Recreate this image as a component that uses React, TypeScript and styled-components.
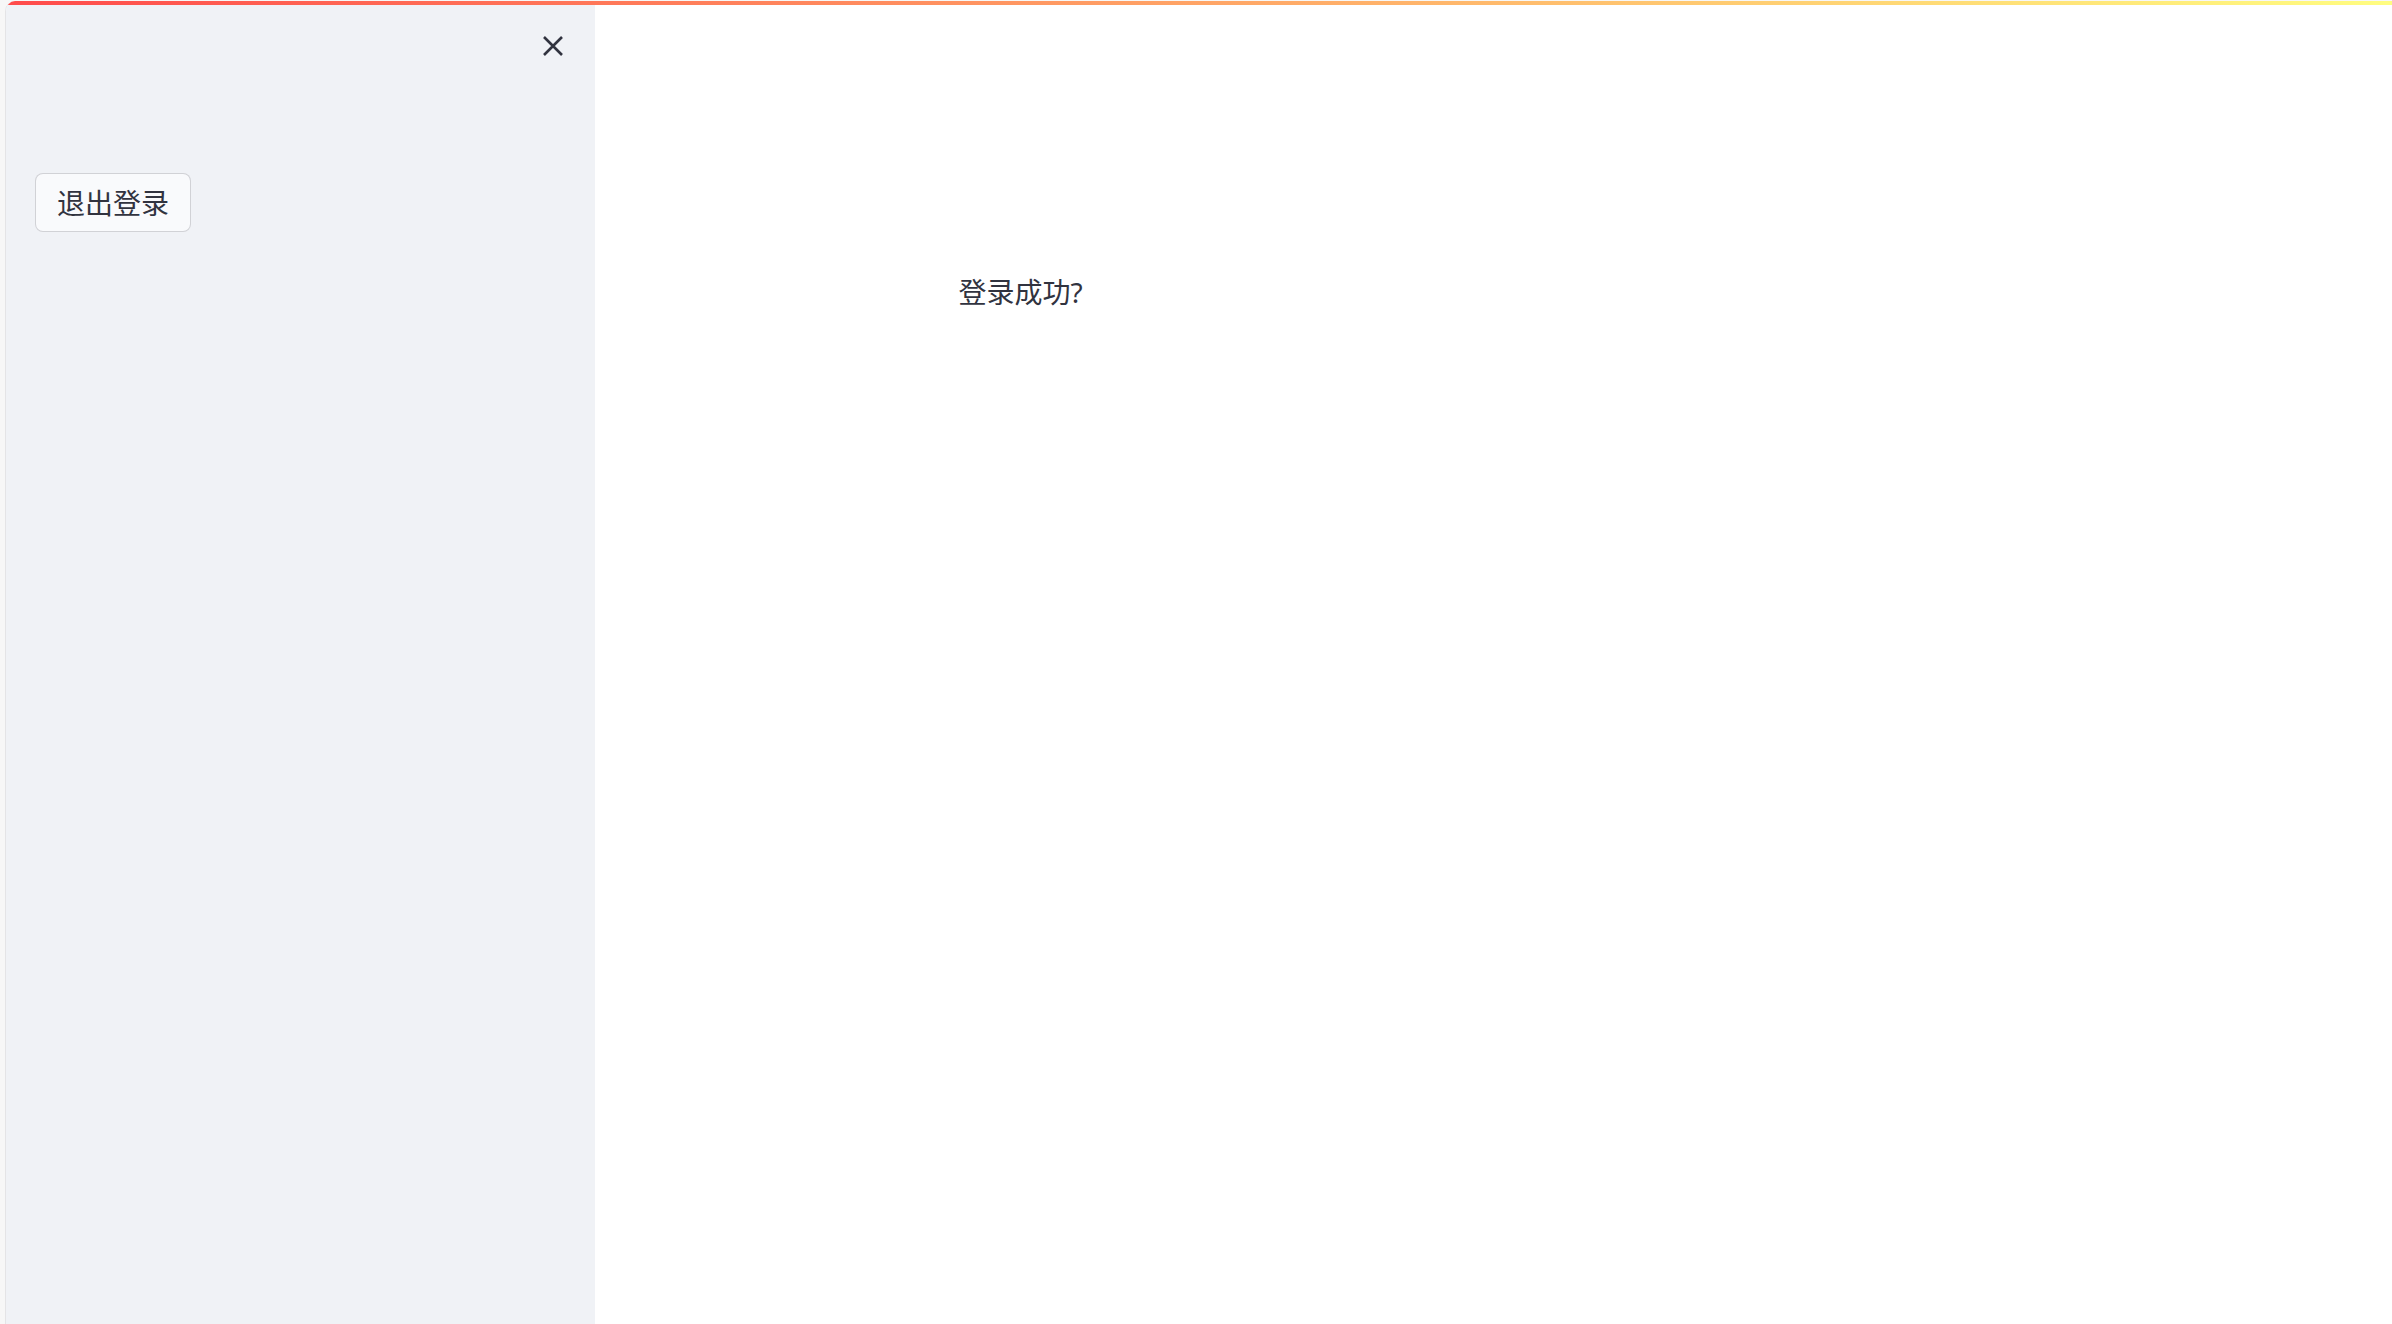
import React from "react";
import styled, { createGlobalStyle } from "styled-components";

const GlobalStyle = createGlobalStyle`
  html, body {
    margin: 0;
    padding: 0;
    height: 100%;
    background-color: #f7f7f7;
  }
  #root {
    height: 100%;
  }
  * {
    box-sizing: border-box;
  }
`;

const Shell = styled.div`
  display: flex;
  flex-direction: column;
  height: calc(100vh - 1px);
  margin: 1px 0 0 5px;
  border-left: 1px solid #e4e4e6;
  border-top-left-radius: 10px;
  overflow: hidden;
  background-color: #ffffff;
  font-family: "Noto Sans", "Noto Sans CJK SC", sans-serif;
  color: #31333f;
`;

const Decoration = styled.div`
  height: 4px;
  flex-shrink: 0;
  background-image: linear-gradient(90deg, #ff4b4b, #fffd80);
`;

const Body = styled.div`
  display: flex;
  flex: 1;
  min-height: 0;
`;

const Sidebar = styled.aside`
  width: 589px;
  flex-shrink: 0;
  background-color: #f0f2f6;
  display: flex;
  flex-direction: column;
  padding: 31px 32px 0 29px;
`;

const SidebarHeader = styled.div`
  display: flex;
  justify-content: flex-end;
  height: 20px;
  margin-bottom: 117px;
`;

const CloseButton = styled.button`
  width: 20px;
  height: 20px;
  padding: 0;
  border: none;
  background: transparent;
  color: #31333f;
  cursor: pointer;
  display: flex;
  align-items: center;
  justify-content: center;
`;

const SecondaryButton = styled.button`
  align-self: flex-start;
  height: 59px;
  padding: 0 21px;
  border: 1px solid rgba(49, 51, 63, 0.2);
  border-radius: 8px;
  background-color: #f9fafc;
  color: #31333f;
  font-family: "Noto Sans", "Noto Sans CJK SC", sans-serif;
  font-size: 28px;
  line-height: 1;
  cursor: pointer;
  &:hover {
    border-color: #ff4b4b;
    color: #ff4b4b;
  }
`;

const Main = styled.main`
  flex: 1;
  min-width: 0;
  overflow: auto;
`;

const BlockContainer = styled.div`
  max-width: 1288px;
  margin: 0 auto;
  padding: 265px 109px 0;
`;

const Markdown = styled.p`
  margin: 0;
  font-size: 28px;
  line-height: 1.6;
`;

const CloseIcon: React.FC = () => (
  <svg width="20" height="20" viewBox="0 0 20 20" fill="none">
    <path d="M1 1L19 19M19 1L1 19" stroke="currentColor" strokeWidth="2.6" />
  </svg>
);

const App: React.FC = () => {
  return (
    <>
      <GlobalStyle />
      <Shell>
        <Decoration />
        <Body>
          <Sidebar>
            <SidebarHeader>
              <CloseButton aria-label="关闭侧边栏">
                <CloseIcon />
              </CloseButton>
            </SidebarHeader>
            <SecondaryButton>退出登录</SecondaryButton>
          </Sidebar>
          <Main>
            <BlockContainer>
              <Markdown>登录成功?</Markdown>
            </BlockContainer>
          </Main>
        </Body>
      </Shell>
    </>
  );
};

export default App;
